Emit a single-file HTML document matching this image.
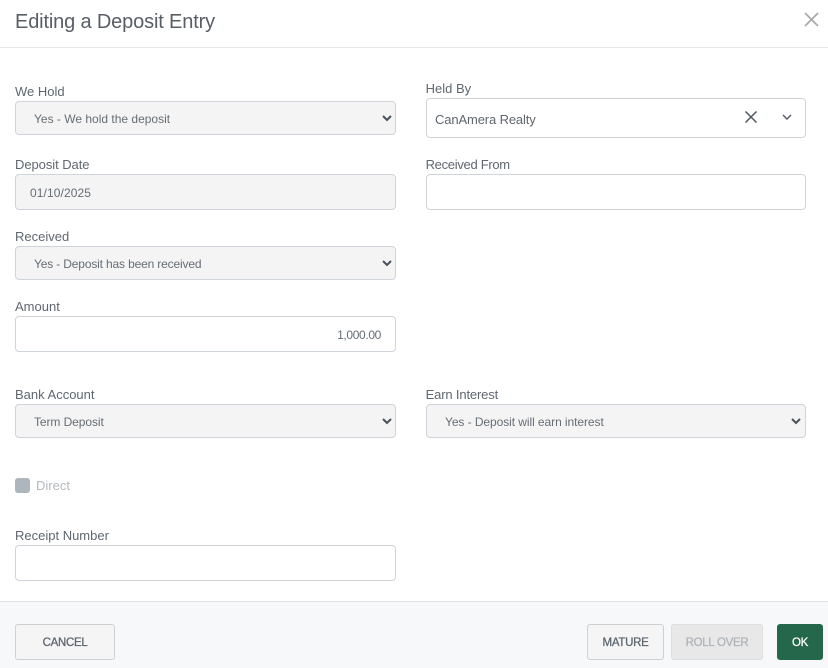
<!DOCTYPE html>
<html><head><meta charset="utf-8"><style>
html,body{margin:0;padding:0;width:828px;height:668px;overflow:hidden;background:#fff;font-family:"Liberation Sans",sans-serif;color:#5a626c}
.a{position:absolute;white-space:nowrap}
.l{position:absolute;white-space:nowrap;font-size:13px;line-height:16px;color:#5f6770}
.b{position:absolute;box-sizing:border-box;border:1px solid #ced4da;border-radius:4px;background:#fff}
.s{background:#f4f4f4}
.t{position:absolute;white-space:nowrap;font-size:12px;line-height:16px;color:#666d75}
.btn{position:absolute;box-sizing:border-box;top:624px;height:36px;border:1px solid #ced0d2;border-radius:3px;background:#f5f5f5;text-align:center;line-height:36px;font-size:11.5px;letter-spacing:-.3px;-webkit-text-stroke:.25px currentColor;color:#5b636d}
svg{position:absolute;overflow:visible}
</style></head><body>
<div class="a" style="left:15px;top:10px;font-size:20px;line-height:24px;color:#585e65;letter-spacing:-.15px">Editing a Deposit Entry</div>
<svg style="left:805px;top:13px" width="13" height="13" fill="none" stroke="#a9a9a9" stroke-width="1.7"><path d="M0 0L13 13M13 0L0 13"/></svg>
<div class="a" style="left:0;top:47px;width:828px;height:1px;background:#e4e6e8"></div>

<div class="l" style="left:15px;top:84px">We Hold</div>
<div class="b s" style="left:15px;top:101px;width:381px;height:34px"></div>
<div class="t" style="left:34px;top:111px">Yes - We hold the deposit</div>
<svg style="left:382px;top:115px" width="10" height="7" fill="none" stroke="#4a5058" stroke-width="2"><path d="M1 1L5 5L9 1"/></svg>

<div class="l" style="left:15px;top:157px;letter-spacing:-.06px">Deposit Date</div>
<div class="b s" style="left:15px;top:174px;width:381px;height:36px"></div>
<div class="t" style="left:30px;top:185px;letter-spacing:.1px">01/10/2025</div>

<div class="l" style="left:15px;top:229px">Received</div>
<div class="b s" style="left:15px;top:246px;width:381px;height:34px"></div>
<div class="t" style="left:34px;top:256px;letter-spacing:-.16px">Yes - Deposit has been received</div>
<svg style="left:382px;top:260px" width="10" height="7" fill="none" stroke="#4a5058" stroke-width="2"><path d="M1 1L5 5L9 1"/></svg>

<div class="l" style="left:15px;top:299px">Amount</div>
<div class="b" style="left:15px;top:316px;width:381px;height:36px"></div>
<div class="t" style="right:447px;top:327px;letter-spacing:-.35px">1,000.00</div>

<div class="l" style="left:15px;top:387px">Bank Account</div>
<div class="b s" style="left:15px;top:404px;width:381px;height:34px"></div>
<div class="t" style="left:34px;top:414px;letter-spacing:-.08px">Term Deposit</div>
<svg style="left:382px;top:418px" width="10" height="7" fill="none" stroke="#4a5058" stroke-width="2"><path d="M1 1L5 5L9 1"/></svg>

<div class="a" style="left:15px;top:478px;width:15px;height:15px;border-radius:3px;background:#adb5bd"></div>
<div class="a" style="left:36px;top:478px;font-size:13px;line-height:16px;color:#b4b9bf">Direct</div>

<div class="l" style="left:15px;top:528px">Receipt Number</div>
<div class="b" style="left:15px;top:545px;width:381px;height:36px"></div>

<div class="l" style="left:425.6px;top:81px">Held By</div>
<div class="b" style="left:426px;top:98px;width:380px;height:40px"></div>
<div class="a" style="left:435px;top:112px;font-size:13px;line-height:16px;color:#60666e;letter-spacing:-.13px">CanAmera Realty</div>
<svg style="left:745px;top:111px" width="12" height="12" fill="none" stroke="#4f565f" stroke-width="1.5"><path d="M.5 .5L11.5 11.5M11.5 .5L.5 11.5"/></svg>
<svg style="left:782px;top:114px" width="10" height="6" fill="none" stroke="#4f565f" stroke-width="1.4"><path d="M1 1L5 5L9 1"/></svg>

<div class="l" style="left:425.6px;top:157px;letter-spacing:-.3px">Received From</div>
<div class="b" style="left:426px;top:174px;width:380px;height:36px"></div>

<div class="l" style="left:425.6px;top:387px;letter-spacing:-.15px">Earn Interest</div>
<div class="b s" style="left:426px;top:404px;width:380px;height:34px"></div>
<div class="t" style="left:445px;top:414px;letter-spacing:-.07px">Yes - Deposit will earn interest</div>
<svg style="left:791px;top:418px" width="10" height="7" fill="none" stroke="#4a5058" stroke-width="2"><path d="M1 1L5 5L9 1"/></svg>

<div class="a" style="left:0;top:601px;width:828px;height:67px;box-sizing:border-box;border-top:1px solid #e1e3e6;background:#f7f8fa"></div>
<div class="btn" style="left:15px;width:100px">CANCEL</div>
<div class="btn" style="left:587px;width:77px">MATURE</div>
<div class="btn" style="left:671px;width:92px;background:#e8e8e8;border-color:#dedede;color:#aeb2b7">ROLL OVER</div>
<div class="btn" style="left:777px;width:46px;background:#24674a;border-color:#24674a;color:#fff">OK</div>
</body></html>
